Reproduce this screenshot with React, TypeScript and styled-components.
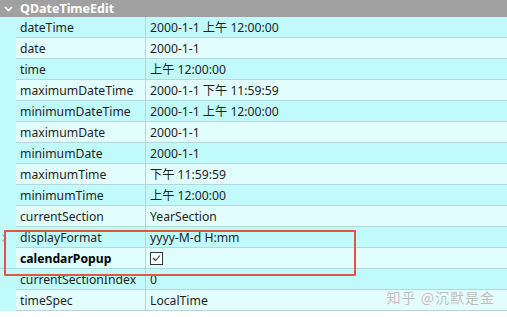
import React from 'react'
import styled, { createGlobalStyle } from 'styled-components'

const GlobalStyle = createGlobalStyle`
    html, body {
        margin: 0;
        padding: 0;
        background: #ffffff;
        width: 507px;
        height: 317px;
        overflow: hidden;
    }
    body {
        font-family: "Noto Sans", "Noto Sans CJK SC", sans-serif;
    }
`

const Editor = styled.div`
    width: 507px;
    height: 317px;
    position: relative;
    background: #ffffff;
`

const Header = styled.div`
    height: 17px;
    background: #a0a0a0;
    display: flex;
    align-items: center;
    color: #ffffff;
    font-weight: 700;
    font-size: 12.5px;
`

const Chevron = styled.div`
    width: 16px;
    display: flex;
    justify-content: center;
    align-items: center;
`

const HeaderTitle = styled.span`
    padding-left: 4px;
    line-height: 17px;
`

const Row = styled.div<{ $alt: boolean }>`
    display: grid;
    grid-template-columns: 16px 130px 1fr;
    height: 21px;
    box-sizing: border-box;
    border-bottom: 1px solid #b6d6dc;
    background: ${p => (p.$alt ? '#e2fdfd' : '#c0fafb')};
    font-size: 12.2px;
    color: #1e1e1e;
`

const Indent = styled.div`
    background: #c0fafb;
    display: flex;
    align-items: center;
    padding-left: 2px;
`

const NameCell = styled.div<{ $bold?: boolean }>`
    padding-left: 4px;
    line-height: 21px;
    border-right: 1px solid #b6d6dc;
    white-space: nowrap;
    overflow: hidden;
    font-weight: ${p => (p.$bold ? 700 : 400)};
    color: ${p => (p.$bold ? '#000000' : '#1e1e1e')};
`

const ValueCell = styled.div`
    padding-left: 4px;
    line-height: 21px;
    white-space: nowrap;
    display: flex;
    align-items: center;
`

const CheckBox = styled.div`
    width: 11px;
    height: 11px;
    border: 1px solid #333333;
    background: #ffffff;
    display: flex;
    align-items: center;
    justify-content: center;
`

const Highlight = styled.div`
    position: absolute;
    left: 4px;
    top: 230px;
    width: 348px;
    height: 42px;
    border: 2px solid #e25348;
    border-radius: 1px;
    pointer-events: none;
`

const Watermark = styled.div`
    position: absolute;
    right: 12px;
    bottom: 10px;
    font-size: 14px;
    color: #bdbdbd;
    letter-spacing: 1px;
    text-shadow: 0 0 1px #ffffff, 0 0 1px #ffffff;
    font-family: "Noto Sans CJK SC", sans-serif;
`

interface Prop {
    name: string
    value?: string
    bold?: boolean
    check?: boolean
    expandable?: boolean
}

const props: Prop[] = [
    { name: 'dateTime', value: '2000-1-1 上午 12:00:00' },
    { name: 'date', value: '2000-1-1' },
    { name: 'time', value: '上午 12:00:00' },
    { name: 'maximumDateTime', value: '2000-1-1 下午 11:59:59' },
    { name: 'minimumDateTime', value: '2000-1-1 上午 12:00:00' },
    { name: 'maximumDate', value: '2000-1-1' },
    { name: 'minimumDate', value: '2000-1-1' },
    { name: 'maximumTime', value: '下午 11:59:59' },
    { name: 'minimumTime', value: '上午 12:00:00' },
    { name: 'currentSection', value: 'YearSection' },
    { name: 'displayFormat', value: 'yyyy-M-d H:mm', expandable: true },
    { name: 'calendarPopup', bold: true, check: true },
    { name: 'currentSectionIndex', value: '0' },
    { name: 'timeSpec', value: 'LocalTime' },
]

const App: React.FC = () => {
    return (
        <Editor>
            <GlobalStyle />
            <Header>
                <Chevron>
                    <svg width="9" height="6" viewBox="0 0 9 6">
                        <path d="M1 1 L4.5 4.5 L8 1" fill="none" stroke="#ffffff" strokeWidth="1.6" />
                    </svg>
                </Chevron>
                <HeaderTitle>QDateTimeEdit</HeaderTitle>
            </Header>
            {props.map((p, i) => (
                <Row key={p.name} $alt={i % 2 === 1}>
                    <Indent>
                        {p.expandable && (
                            <svg width="5" height="8" viewBox="0 0 5 8">
                                <path d="M0.5 0.5 L4 4 L0.5 7.5" fill="none" stroke="#8cb8bc" strokeWidth="1.2" />
                            </svg>
                        )}
                    </Indent>
                    <NameCell $bold={p.bold}>{p.name}</NameCell>
                    <ValueCell>
                        {p.check ? (
                            <CheckBox>
                                <svg width="9" height="8" viewBox="0 0 9 8">
                                    <path d="M1 4 L3.5 6.5 L8 1.5" fill="none" stroke="#333333" strokeWidth="1.1" />
                                </svg>
                            </CheckBox>
                        ) : (
                            p.value
                        )}
                    </ValueCell>
                </Row>
            ))}
            <Highlight />
            <Watermark>知乎 @沉默是金</Watermark>
        </Editor>
    )
}

export default App
